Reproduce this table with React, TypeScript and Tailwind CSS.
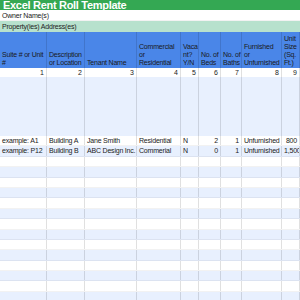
import React from "react";

const COLS = "grid grid-cols-[47px_38px_52px_44px_18px_22px_21px_40px_18px]";
const LINE = "border-r border-[rgba(0,0,0,0.12)]";

type Cell = { t?: string; r?: boolean };

const headers: string[][] = [
  ["Suite # or Unit", "#"],
  ["Description", "or Location"],
  ["Tenant Name"],
  ["Commercial", "or", "Residential"],
  ["Vaca", "nt?", "Y/N"],
  ["No. of", "Beds"],
  ["No. of", "Baths"],
  ["Furnished", "or", "Unfurnished"],
  ["Unit", "Size", "(Sq.", "Ft.)"],
];

const examples: Cell[][] = [
  [
    { t: "example: A1" },
    { t: "Building A" },
    { t: "Jane Smith" },
    { t: "Residential" },
    { t: "N" },
    { t: "2", r: true },
    { t: "1", r: true },
    { t: "Unfurnished" },
    { t: "800", r: true },
  ],
  [
    { t: "example: P12" },
    { t: "Building B" },
    { t: "ABC Design Inc." },
    { t: "Commerial" },
    { t: "N" },
    { t: "0", r: true },
    { t: "1", r: true },
    { t: "Unfurnished" },
    { t: "1,500", r: true },
  ],
];

function DataRow({ cells, shade }: { cells: Cell[]; shade: boolean }) {
  return (
    <div
      className={`${COLS} h-[10.4px] border-b border-[rgba(0,0,0,0.05)] ${
        shade ? "bg-[#e8f0fe]" : "bg-white"
      }`}
    >
      {cells.map((c, i) => (
        <div
          key={i}
          className={`${LINE} overflow-hidden whitespace-nowrap px-[2px] text-[7px] leading-[10px] tracking-[-0.2px] text-[#222] ${
            c.r ? "text-right" : "text-left"
          }`}
        >
          {c.t ?? ""}
        </div>
      ))}
    </div>
  );
}

export default function App() {
  const empty: Cell[] = Array.from({ length: 9 }, () => ({}));
  return (
    <div
      className="w-[300px] h-[300px] overflow-hidden bg-white"
      style={{ fontFamily: '"Liberation Sans", Arial, sans-serif' }}
    >
      <div className="h-[10px] overflow-hidden bg-[#34a853] pl-[3px] text-[11px] font-bold leading-[10px] tracking-[-0.3px] text-white whitespace-nowrap">
        Excel Rent Roll Template
      </div>
      <div className="h-[11px] bg-white pl-[2px] text-[7px] leading-[11px] tracking-[-0.2px] text-[#222] border-b border-[rgba(0,0,0,0.05)]">
        Owner Name(s)
      </div>
      <div className="h-[11px] bg-[#b7e1cd] pl-[2px] text-[7px] leading-[11px] tracking-[-0.2px] text-[#222]">
        Property(ies) Address(es)
      </div>
      <div className={`${COLS} h-[36px] bg-[#4a86e8]`}>
        {headers.map((lines, i) => (
          <div
            key={i}
            className={`${LINE} flex flex-col justify-end overflow-hidden whitespace-nowrap px-[2px] pb-[1px] text-[7px] leading-[8px] tracking-[-0.2px] text-[#1a1a1a]`}
          >
            {lines.map((l, j) => (
              <span key={j}>{l}</span>
            ))}
          </div>
        ))}
      </div>
      <div className={`${COLS} h-[9px] bg-white`}>
        {Array.from({ length: 9 }, (_, i) => (
          <div
            key={i}
            className={`${LINE} px-[2px] text-right text-[7px] leading-[9px] text-[#222]`}
          >
            {i + 1}
          </div>
        ))}
      </div>
      <div className={`${COLS} h-[59px] bg-[#e8f0fe]`}>
        {Array.from({ length: 9 }, (_, i) => (
          <div key={i} className={LINE} />
        ))}
      </div>
      <DataRow cells={examples[0]} shade={false} />
      <DataRow cells={examples[1]} shade={true} />
      {Array.from({ length: 14 }, (_, i) => (
        <DataRow key={i} cells={empty} shade={i % 2 === 1} />
      ))}
    </div>
  );
}
